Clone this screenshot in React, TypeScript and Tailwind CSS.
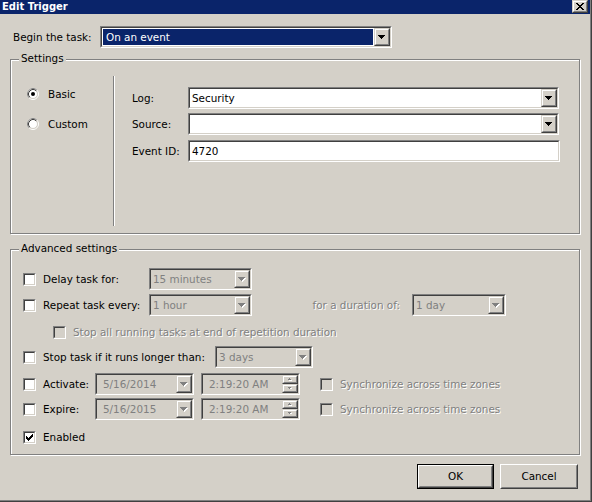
import React from "react";

type Kids = { className?: string; inner?: string; children?: React.ReactNode };

function Sunken({ className = "", inner = "bg-white", children }: Kids) {
  return (
    <div className={`border border-t-[#808080] border-l-[#808080] border-r-white border-b-white ${className}`}>
      <div className={`flex h-full w-full border border-t-[#404040] border-l-[#404040] border-r-[#d4d0c8] border-b-[#d4d0c8] ${inner}`}>
        {children}
      </div>
    </div>
  );
}

function Raised({ className = "", children }: Kids) {
  return (
    <div className={`border border-t-[#d4d0c8] border-l-[#d4d0c8] border-r-[#404040] border-b-[#404040] ${className}`}>
      <div className="flex h-full w-full items-center justify-center border border-t-white border-l-white border-r-[#808080] border-b-[#808080] bg-[#d4d0c8]">
        {children}
      </div>
    </div>
  );
}

function DownArrow({ disabled }: { disabled?: boolean }) {
  const tri = (dx: number, dy: number, fill: string) => (
    <g fill={fill} transform={`translate(${dx} ${dy})`}>
      <rect x="0" y="0" width="7" height="1" />
      <rect x="1" y="1" width="5" height="1" />
      <rect x="2" y="2" width="3" height="1" />
      <rect x="3" y="3" width="1" height="1" />
    </g>
  );
  return (
    <svg width="8" height="5" shapeRendering="crispEdges" className="block">
      {disabled && tri(1, 1, "#fff")}
      {tri(0, 0, disabled ? "#808080" : "#000")}
    </svg>
  );
}

function SpinArrow({ up }: { up?: boolean }) {
  return (
    <svg width="4" height="3" shapeRendering="crispEdges" className="block">
      <g fill="#fff">
        {up ? <rect x="1" y="2" width="3" height="1" /> : <rect x="2" y="1" width="2" height="1" />}
      </g>
      <g fill="#808080">
        {up ? (
          <>
            <rect x="1" y="0" width="1" height="1" />
            <rect x="0" y="1" width="3" height="1" />
          </>
        ) : (
          <>
            <rect x="0" y="0" width="3" height="1" />
            <rect x="1" y="1" width="1" height="1" />
          </>
        )}
      </g>
    </svg>
  );
}

function Combo({
  w,
  text = "",
  disabled,
  selected,
  noBtn,
  spin,
  pad = "pl-[2px]",
}: {
  w: string;
  text?: string;
  disabled?: boolean;
  selected?: boolean;
  noBtn?: boolean;
  spin?: boolean;
  pad?: string;
}) {
  return (
    <Sunken className={`${w} h-[22px] shrink-0`} inner={disabled ? "bg-[#d4d0c8]" : "bg-white"}>
      {selected ? (
        <div className="flex flex-1 p-px">
          <div className="flex flex-1 items-center bg-[#0a246a] pl-[3px] whitespace-nowrap text-white">{text}</div>
        </div>
      ) : (
        <div className={`flex flex-1 items-center whitespace-nowrap ${pad} ${disabled ? "text-[#808080]" : "text-black"}`}>
          {text}
        </div>
      )}
      {!noBtn && !spin && (
        <Raised className="h-full w-[16px] shrink-0">
          <DownArrow disabled={disabled} />
        </Raised>
      )}
      {spin && (
        <div className="flex h-full w-[16px] shrink-0 flex-col">
          <Raised className="h-[9px]">
            <SpinArrow up />
          </Raised>
          <Raised className="h-[9px]">
            <SpinArrow />
          </Raised>
        </div>
      )}
    </Sunken>
  );
}

function CheckBox({ checked, disabled }: { checked?: boolean; disabled?: boolean }) {
  return (
    <Sunken
      className="h-[13px] w-[13px] shrink-0"
      inner={`items-center justify-center ${disabled ? "bg-[#d4d0c8]" : "bg-white"}`}
    >
      {checked && (
        <svg width="7" height="7" shapeRendering="crispEdges" className="block">
          <path
            fill="#000"
            d="M6 0h1v1h-1z M5 1h2v1h-2z M0 2h1v1h-1z M4 2h3v1h-3z M0 3h2v1h-2z M3 3h3v1h-3z M0 4h5v1h-5z M1 5h3v1h-3z M2 6h1v1h-1z"
          />
        </svg>
      )}
    </Sunken>
  );
}

function Radio({ checked }: { checked?: boolean }) {
  return (
    <svg width="12" height="12" viewBox="0 0 12 12" className="block shrink-0">
      <circle cx="6" cy="6" r="5.5" fill="none" stroke="#fff" />
      <path d="M2.11 9.89 A5.5 5.5 0 0 1 9.89 2.11" fill="none" stroke="#808080" />
      <circle cx="6" cy="6" r="4.5" fill="#fff" stroke="#d4d0c8" />
      <path d="M2.82 9.18 A4.5 4.5 0 0 1 9.18 2.82" fill="none" stroke="#404040" />
      {checked && <circle cx="6" cy="6" r="2" fill="#000" />}
    </svg>
  );
}

function GroupBox({ title, className = "", children }: { title: string; className?: string; children?: React.ReactNode }) {
  return (
    <div
      className={`relative border border-[#808080] shadow-[inset_1px_1px_0_#fff,1px_1px_0_#fff] ${className}`}
    >
      <span className="absolute -top-[7px] left-[8px] bg-[#d4d0c8] px-[2px]">{title}</span>
      {children}
    </div>
  );
}

function PushButton({ label, isDefault }: { label: string; isDefault?: boolean }) {
  const face = (
    <div className="h-full w-full border border-t-white border-l-white border-r-[#404040] border-b-[#404040]">
      <div className="flex h-full w-full items-center justify-center border border-t-[#d4d0c8] border-l-[#d4d0c8] border-r-[#808080] border-b-[#808080]">
        {label}
      </div>
    </div>
  );
  return isDefault ? (
    <div className="h-[25px] w-[77px] border border-black">{face}</div>
  ) : (
    <div className="h-[25px] w-[78px]">{face}</div>
  );
}

const dis = "text-[#808080] [text-shadow:1px_1px_0_#fff]";

export default function App() {
  return (
    <div className="h-[502px] w-[592px] border-r border-b border-r-[#404040] border-b-[#404040] bg-[#d4d0c8] font-['DejaVu_Sans',sans-serif] text-[10.4px] leading-none text-black">
      <div className="h-full w-full border-r border-b border-r-[#808080] border-b-[#808080]">
        {/* title bar */}
        <div className="flex h-[14px] items-start justify-between bg-[#0a246a] px-[2px]">
          <span className="mt-[2px] text-[10px] font-bold text-white">Edit Trigger</span>
          <Raised className="h-[13px] w-[16px]">
            <svg width="8" height="7" shapeRendering="crispEdges" className="block">
              <path
                fill="#000"
                d="M0 0h2v1h-2z M6 0h2v1h-2z M1 1h2v1h-2z M5 1h2v1h-2z M2 2h4v1h-4z M3 3h2v1h-2z M2 4h4v1h-4z M1 5h2v1h-2z M5 5h2v1h-2z M0 6h2v1h-2z M6 6h2v1h-2z"
              />
            </svg>
          </Raised>
        </div>

        {/* begin the task */}
        <div className="mt-[12px] flex h-[22px] items-center pl-[13px]">
          <span className="w-[87px]">Begin the task:</span>
          <Combo w="w-[292px]" text="On an event" selected />
        </div>

        {/* settings */}
        <GroupBox title="Settings" className="mt-[11px] ml-[10px] h-[175px] w-[570px]">
          <div className="flex h-full">
            <div className="w-[102px] shrink-0 pt-[28px] pl-[16px]">
              <div className="flex h-[12px] items-center">
                <Radio checked />
                <span className="ml-[9px]">Basic</span>
              </div>
              <div className="mt-[18px] flex h-[12px] items-center">
                <Radio />
                <span className="ml-[9px]">Custom</span>
              </div>
            </div>
            <div className="mt-[16px] h-[150px] w-[2px] border-r border-l border-l-[#808080] border-r-white" />
            <div className="pt-[27px] pl-[17px]">
              <div className="flex h-[22px] items-center">
                <span className="w-[56px]">Log:</span>
                <Combo w="w-[371px]" text="Security" />
              </div>
              <div className="mt-[4px] flex h-[22px] items-center">
                <span className="w-[56px]">Source:</span>
                <Combo w="w-[371px]" />
              </div>
              <div className="mt-[5px] flex h-[22px] items-center">
                <span className="w-[56px]">Event ID:</span>
                <Combo w="w-[372px]" text="4720" noBtn />
              </div>
            </div>
          </div>
        </GroupBox>

        {/* advanced settings */}
        <GroupBox title="Advanced settings" className="mt-[15px] ml-[10px] h-[206px] w-[570px]">
          <div className="pt-[18px] pl-[12px]">
            <div className="flex h-[22px] items-center">
              <CheckBox />
              <span className="ml-[7px] w-[106px]">Delay task for:</span>
              <Combo w="w-[103px]" text="15 minutes" disabled />
            </div>
            <div className="mt-[4px] flex h-[22px] items-center">
              <CheckBox />
              <span className="ml-[7px] w-[106px]">Repeat task every:</span>
              <Combo w="w-[103px]" text="1 hour" disabled />
              <span className={`w-[160px] pr-[12px] text-right ${dis}`}>for a duration of:</span>
              <Combo w="w-[94px]" text="1 day" disabled />
            </div>
            <div className="mt-[5px] flex h-[22px] items-center pl-[30px]">
              <CheckBox disabled />
              <span className={`ml-[7px] ${dis}`}>Stop all running tasks at end of repetition duration</span>
            </div>
            <div className="mt-[3px] flex h-[22px] items-center">
              <CheckBox />
              <span className="ml-[7px] w-[172px]">Stop task if it runs longer than:</span>
              <Combo w="w-[98px]" text="3 days" disabled />
            </div>
            <div className="mt-[5px] flex h-[22px] items-center">
              <CheckBox />
              <span className="ml-[7px] w-[52px]">Activate:</span>
              <Combo w="w-[99px]" text="5/16/2014" disabled pad="pl-[6px]" />
              <span className="w-[7px]" />
              <Combo w="w-[99px]" text="2:19:20 AM" disabled spin pad="pl-[6px]" />
              <span className="w-[20px]" />
              <CheckBox disabled />
              <span className={`ml-[7px] ${dis}`}>Synchronize across time zones</span>
            </div>
            <div className="mt-[3px] flex h-[22px] items-center">
              <CheckBox />
              <span className="ml-[7px] w-[52px]">Expire:</span>
              <Combo w="w-[99px]" text="5/16/2015" disabled pad="pl-[6px]" />
              <span className="w-[7px]" />
              <Combo w="w-[99px]" text="2:19:20 AM" disabled spin pad="pl-[6px]" />
              <span className="w-[20px]" />
              <CheckBox disabled />
              <span className={`ml-[7px] ${dis}`}>Synchronize across time zones</span>
            </div>
            <div className="mt-[6px] flex h-[22px] items-center">
              <CheckBox checked />
              <span className="ml-[7px]">Enabled</span>
            </div>
          </div>
        </GroupBox>

        {/* buttons */}
        <div className="mt-[9px] flex justify-end gap-[6px] pr-[12px]">
          <PushButton label="OK" isDefault />
          <PushButton label="Cancel" />
        </div>
      </div>
    </div>
  );
}
